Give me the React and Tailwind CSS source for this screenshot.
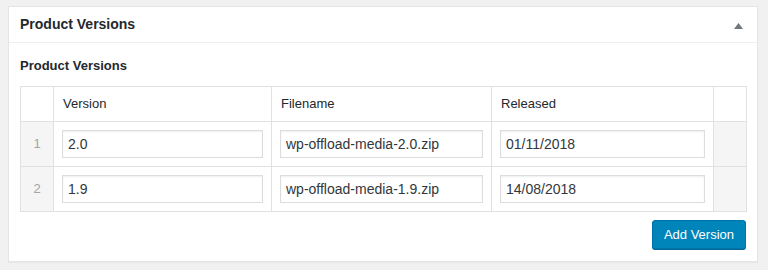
import React from 'react';

const ROWS = [
  { n: 1, version: '2.0', file: 'wp-offload-media-2.0.zip', released: '01/11/2018' },
  { n: 2, version: '1.9', file: 'wp-offload-media-1.9.zip', released: '14/08/2018' },
];

const inputCls =
  'w-full h-[28px] border border-[#dddddd] bg-white pl-[5px] text-[14px] text-[#32373c] shadow-[inset_0_1px_2px_rgba(0,0,0,0.07)] outline-none';

const App = () => {
  return (
    <div className="w-[768px] h-[270px] bg-[#f1f1f1] pl-2 pt-[6px] font-['Liberation_Sans',Arial,sans-serif] text-[#23282d]">
      <div className="w-[750px] h-[256px] bg-white border border-[#e5e5e5] shadow-[0_1px_1px_rgba(0,0,0,0.04)] flex flex-col">
        {/* Header */}
        <div className="h-[36px] shrink-0 border-b border-[#eeeeee] flex items-center justify-between pl-[11px] pr-[14px]">
          <h2 className="text-[14px] font-bold">Product Versions</h2>
          <svg width="9" height="6" viewBox="0 0 9 6" className="mt-[2px]">
            <path d="M4.5 0 L9 6 L0 6 Z" fill="#72777c" />
          </svg>
        </div>

        {/* Body */}
        <div className="px-[11px] pt-[15px] flex flex-col">
          <h3 className="text-[13px] font-bold leading-[16px] mb-[12px]">Product Versions</h3>

          <table className="table-fixed border-collapse w-[726px] text-[13px]">
            <colgroup>
              <col className="w-[33px]" />
              <col className="w-[218px]" />
              <col className="w-[220px]" />
              <col className="w-[222px]" />
              <col className="w-[33px]" />
            </colgroup>
            <thead>
              <tr className="h-[35px]">
                <th className="border border-[#e1e1e1]" />
                <th className="border border-[#e1e1e1] text-left font-normal pl-[9px]">Version</th>
                <th className="border border-[#e1e1e1] text-left font-normal pl-[9px]">Filename</th>
                <th className="border border-[#e1e1e1] text-left font-normal pl-[9px]">Released</th>
                <th className="border border-[#e1e1e1]" />
              </tr>
            </thead>
            <tbody>
              {ROWS.map((row) => (
                <tr key={row.n}>
                  <td className="border border-[#e1e1e1] bg-[#f5f5f5] text-center text-[#a0a5aa]">{row.n}</td>
                  <td className="border border-[#e1e1e1] px-[8px] py-[8px]">
                    <input className={inputCls} defaultValue={row.version} />
                  </td>
                  <td className="border border-[#e1e1e1] px-[8px] py-[8px]">
                    <input className={inputCls} defaultValue={row.file} />
                  </td>
                  <td className="border border-[#e1e1e1] px-[8px] py-[8px]">
                    <input className={inputCls} defaultValue={row.released} />
                  </td>
                  <td className="border border-[#e1e1e1] bg-[#f5f5f5]" />
                </tr>
              ))}
            </tbody>
          </table>

          <div className="w-[726px] flex justify-end mt-[8px]">
            <button className="h-[29px] px-[11px] rounded-[3px] bg-[#0085ba] border border-[#0073aa] shadow-[0_1px_0_#006799] text-white text-[13px] leading-none">
              Add Version
            </button>
          </div>
        </div>
      </div>
    </div>
  );
};

export default App;
